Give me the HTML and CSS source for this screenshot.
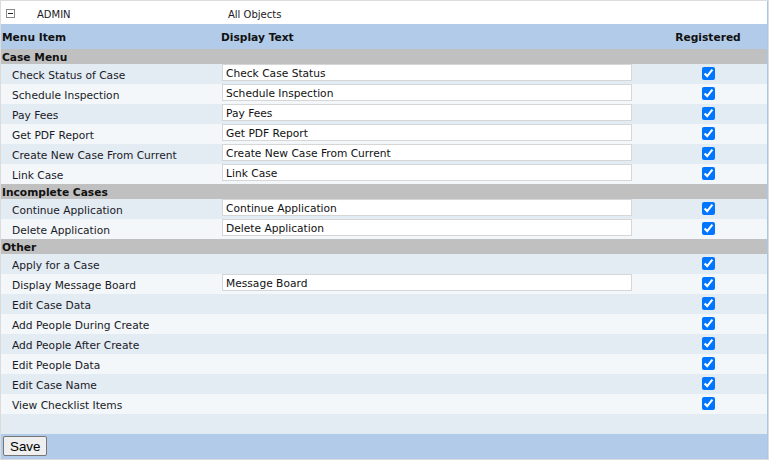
FILE: index.html
```html
<!DOCTYPE html>
<html>
<head>
<meta charset="utf-8">
<link rel="stylesheet" href="styles.css">
</head>
<body>
<div class="frame">
  <div class="panel">
    <div class="topbar">
      <span class="toggle"><span class="minus"></span></span>
      <span class="role">ADMIN</span>
      <span class="scope">All Objects</span>
    </div>
    <div class="row head">
      <div class="c1">Menu Item</div>
      <div class="c2">Display Text</div>
      <div class="c3">Registered</div>
    </div>

    <div class="section">Case Menu</div>
    <div class="row dark">
      <div class="c1 label">Check Status of Case</div>
      <div class="c2"><input class="txt" type="text" value="Check Case Status"></div>
      <div class="c3"><input type="checkbox" checked></div>
    </div>
    <div class="row light">
      <div class="c1 label">Schedule Inspection</div>
      <div class="c2"><input class="txt" type="text" value="Schedule Inspection"></div>
      <div class="c3"><input type="checkbox" checked></div>
    </div>
    <div class="row dark">
      <div class="c1 label">Pay Fees</div>
      <div class="c2"><input class="txt" type="text" value="Pay Fees"></div>
      <div class="c3"><input type="checkbox" checked></div>
    </div>
    <div class="row light">
      <div class="c1 label">Get PDF Report</div>
      <div class="c2"><input class="txt" type="text" value="Get PDF Report"></div>
      <div class="c3"><input type="checkbox" checked></div>
    </div>
    <div class="row dark">
      <div class="c1 label">Create New Case From Current</div>
      <div class="c2"><input class="txt" type="text" value="Create New Case From Current"></div>
      <div class="c3"><input type="checkbox" checked></div>
    </div>
    <div class="row light">
      <div class="c1 label">Link Case</div>
      <div class="c2"><input class="txt" type="text" value="Link Case"></div>
      <div class="c3"><input type="checkbox" checked></div>
    </div>

    <div class="section">Incomplete Cases</div>
    <div class="row dark">
      <div class="c1 label">Continue Application</div>
      <div class="c2"><input class="txt" type="text" value="Continue Application"></div>
      <div class="c3"><input type="checkbox" checked></div>
    </div>
    <div class="row light">
      <div class="c1 label">Delete Application</div>
      <div class="c2"><input class="txt" type="text" value="Delete Application"></div>
      <div class="c3"><input type="checkbox" checked></div>
    </div>

    <div class="section">Other</div>
    <div class="row dark">
      <div class="c1 label">Apply for a Case</div>
      <div class="c2"></div>
      <div class="c3"><input type="checkbox" checked></div>
    </div>
    <div class="row light">
      <div class="c1 label">Display Message Board</div>
      <div class="c2"><input class="txt" type="text" value="Message Board"></div>
      <div class="c3"><input type="checkbox" checked></div>
    </div>
    <div class="row dark">
      <div class="c1 label">Edit Case Data</div>
      <div class="c2"></div>
      <div class="c3"><input type="checkbox" checked></div>
    </div>
    <div class="row light">
      <div class="c1 label">Add People During Create</div>
      <div class="c2"></div>
      <div class="c3"><input type="checkbox" checked></div>
    </div>
    <div class="row dark">
      <div class="c1 label">Add People After Create</div>
      <div class="c2"></div>
      <div class="c3"><input type="checkbox" checked></div>
    </div>
    <div class="row light">
      <div class="c1 label">Edit People Data</div>
      <div class="c2"></div>
      <div class="c3"><input type="checkbox" checked></div>
    </div>
    <div class="row dark">
      <div class="c1 label">Edit Case Name</div>
      <div class="c2"></div>
      <div class="c3"><input type="checkbox" checked></div>
    </div>
    <div class="row light">
      <div class="c1 label">View Checklist Items</div>
      <div class="c2"></div>
      <div class="c3"><input type="checkbox" checked></div>
    </div>
    <div class="row dark"></div>

    <div class="footer">
      <button class="save" type="button">Save</button>
    </div>
  </div>
</div>
</body>
</html>
```

FILE: styles.css
```css
html, body {
  margin: 0;
  padding: 0;
  background: #ffffff;
}

body {
  font-family: "DejaVu Sans", Verdana, sans-serif;
  font-size: 10.67px;
  color: #1a1a26;
}

.frame {
  width: 767px;
  border: 1px solid #dcdcdc;
}

.panel {
  border-right: 1px solid #a8c6e6;
  display: flex;
  flex-direction: column;
}

.topbar {
  height: 23px;
  display: flex;
  align-items: center;
  background: #ffffff;
  font-size: 10px;
}

.toggle {
  width: 7px;
  height: 7px;
  border: 1px solid #8a8a8a;
  margin-left: 5px;
  margin-top: 1px;
  display: flex;
  align-items: center;
  justify-content: center;
  background: #fff;
}

.minus {
  width: 5px;
  height: 1px;
  background: #222;
}

.role {
  margin-left: 22px;
  width: 191px;
  padding-top: 3px;
}

.scope {
  padding-top: 3px;
}

.row {
  display: grid;
  grid-template-columns: 220px 428px 1fr;
  height: 20px;
  line-height: 20px;
}

.row.head {
  height: 25px;
  line-height: 25px;
  background: #b1cbe8;
  font-weight: bold;
  color: #111;
}

.row.head > div {
  padding-top: 1px;
}

.row.head .c1 {
  padding-left: 1px;
}

.dark {
  background: #e3ebf3;
}

.light {
  background: #f3f7fa;
}

.section {
  box-sizing: border-box;
  height: 15px;
  line-height: 15px;
  padding-top: 1px;
  background: #c0c0c0;
  font-weight: bold;
  padding-left: 1px;
  color: #111;
}

.label {
  padding-left: 11px;
  padding-top: 2px;
}

.c2 {
  display: flex;
  align-items: flex-start;
}

.txt {
  box-sizing: border-box;
  width: 410px;
  height: 17px;
  margin: 0 0 0 1px;
  padding: 1px 3px 0 3px;
  border: 1px solid #d6d6d6;
  background: #ffffff;
  font-family: "DejaVu Sans", Verdana, sans-serif;
  font-size: 10.67px;
  color: #111;
  outline: none;
}

.c3 {
  display: flex;
  justify-content: center;
  align-items: flex-start;
}

.c3 input[type="checkbox"] {
  width: 13px;
  height: 13px;
  margin: 3px 0 0 0;
}

.row.head .c3 {
  display: block;
  text-align: center;
}

.footer {
  height: 25px;
  background: #b1cbe8;
  display: flex;
  align-items: flex-start;
}

.save {
  margin: 2px 0 0 2px;
  height: 20px;
  padding: 0 6px;
  font-family: "Liberation Sans", Arial, sans-serif;
  font-size: 13.33px;
  color: #000;
  background: #efefef;
  border: 1px solid #767676;
  border-radius: 2px;
}
```
